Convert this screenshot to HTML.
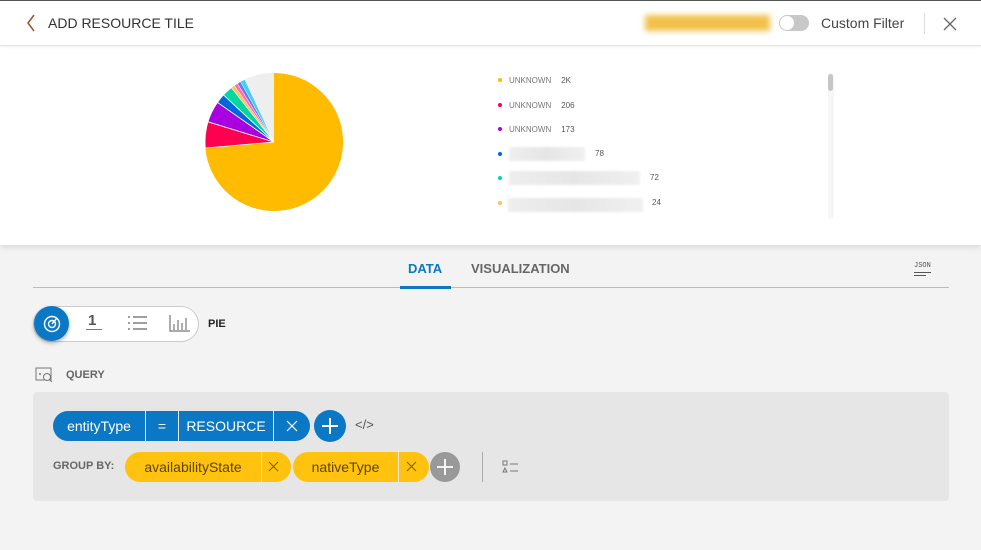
<!DOCTYPE html>
<html><head><meta charset="utf-8"><style>
*{box-sizing:border-box;margin:0;padding:0}
body{width:981px;height:550px;overflow:hidden;background:#f3f3f3;font-family:"Liberation Sans",sans-serif;position:relative}
.top{position:absolute;left:0;top:0;width:981px;height:245px;background:#fff;box-shadow:0 2px 6px rgba(0,0,0,.12);border-top:1px solid #555}
.hdr{position:absolute;left:0;top:0;width:981px;height:45px;border-bottom:1px solid #e4e4e4;box-shadow:0 1px 3px rgba(0,0,0,.06)}
.abs{position:absolute}
.lg{position:absolute;font-size:8px;color:#777}
.lg .d{position:absolute;left:0;top:2px;width:4px;height:4px;border-radius:50%}
.blur{position:absolute;height:14px;background:linear-gradient(90deg,#eee,#e6e6e6,#f0f0f0);filter:blur(1px)}
.chip{position:absolute;height:30px;color:#fff;font-size:14px;line-height:30px;text-align:center}
</style></head><body>
<div class="top">
 <div class="hdr">
  <svg class="abs" style="left:26px;top:13px" width="10" height="18"><path d="M8 1L2 9L8 17" stroke="#a0522d" stroke-width="1.5" fill="none"/></svg>
  <div class="abs" style="left:48px;top:14px;font-size:14px;color:#333">ADD RESOURCE TILE</div>
  <div class="abs" style="left:645px;top:14px;width:125px;height:16px;background:#f2c14a;filter:blur(3px)"></div>
  <div class="abs" style="left:779px;top:14px;width:30px;height:16px;border-radius:8px;background:#c8c8c8"></div>
  <div class="abs" style="left:780px;top:15px;width:14px;height:14px;border-radius:50%;background:#fff"></div>
  <div class="abs" style="left:821px;top:14px;font-size:14px;color:#444">Custom Filter</div>
  <div class="abs" style="left:924px;top:12px;width:1px;height:21px;background:#ddd"></div>
  <svg class="abs" style="left:943px;top:16px" width="14" height="14"><path d="M1 1L13 13M13 1L1 13" stroke="#666" stroke-width="1.3"/></svg>
 </div>
 <svg class="abs" style="left:0;top:0" width="400" height="240">
  <path d="M274 141L274 72A69 69 0 1 1 205.3 147Z" fill="#ffbb00"/>
  <path d="M274 141L205.3 147A69 69 0 0 1 208 120.8Z" fill="#ff0050" stroke="#fff" stroke-width=".8"/>
  <path d="M274 141L208 120.8A69 69 0 0 1 217.5 101.4Z" fill="#a800e0" stroke="#fff" stroke-width=".8"/>
  <path d="M274 141L217.5 101.4A69 69 0 0 1 223.5 93.9Z" fill="#0066dd" stroke="#fff" stroke-width=".8"/>
  <path d="M274 141L223.5 93.9A69 69 0 0 1 231.5 86.6Z" fill="#00d8a0" stroke="#fff" stroke-width=".8"/>
  <path d="M274 141L231.5 86.6A69 69 0 0 1 234.4 84.5Z" fill="#ffc060" stroke="#fff" stroke-width=".5"/>
  <path d="M274 141L234.4 84.5A69 69 0 0 1 237.4 82.5Z" fill="#ff70a0" stroke="#fff" stroke-width=".5"/>
  <path d="M274 141L237.4 82.5A69 69 0 0 1 240.5 80.7Z" fill="#7070ff" stroke="#fff" stroke-width=".5"/>
  <path d="M274 141L240.5 80.7A69 69 0 0 1 244.8 78.5Z" fill="#40d0f0" stroke="#fff" stroke-width=".5"/>
  <path d="M274 141L244.8 78.5A69 69 0 0 1 274 72Z" fill="#eeeeee"/>
 </svg>
 <div class="lg" style="left:498px;top:75px"><span class="d" style="background:#ffbb00"></span><span style="margin-left:11px">UNKNOWN</span><span style="margin-left:10px;color:#555">2K</span></div>
 <div class="lg" style="left:498px;top:100px"><span class="d" style="background:#ff0050"></span><span style="margin-left:11px">UNKNOWN</span><span style="margin-left:10px;color:#555">206</span></div>
 <div class="lg" style="left:498px;top:124px"><span class="d" style="background:#a800e0"></span><span style="margin-left:11px">UNKNOWN</span><span style="margin-left:10px;color:#555">173</span></div>
 <div class="lg" style="left:498px;top:149px"><span class="d" style="background:#0066dd"></span></div>
 <div class="blur" style="left:509px;top:146px;width:76px"></div><div class="lg" style="left:595px;top:148px;color:#555">78</div>
 <div class="lg" style="left:498px;top:173px"><span class="d" style="background:#00d8a0"></span></div>
 <div class="blur" style="left:509px;top:170px;width:131px"></div><div class="lg" style="left:650px;top:172px;color:#555">72</div>
 <div class="lg" style="left:498px;top:198px"><span class="d" style="background:#ffc060"></span></div>
 <div class="blur" style="left:508px;top:197px;width:135px"></div><div class="lg" style="left:652px;top:197px;color:#555">24</div>
 <div class="abs" style="left:828px;top:72px;width:6px;height:146px;background:#f6f6f6;border-radius:3px"></div>
 <div class="abs" style="left:828px;top:73px;width:5px;height:17px;background:#c6c6c6;border-radius:3px"></div>
</div>

<div class="abs" style="left:408px;top:261px;font-size:13px;font-weight:bold;color:#0b78c6">DATA</div>
<div class="abs" style="left:471px;top:261px;font-size:13px;font-weight:bold;color:#666">VISUALIZATION</div>
<div class="abs" style="left:33px;top:287px;width:916px;height:1px;background:#bbb"></div>
<div class="abs" style="left:400px;top:286px;width:51px;height:3px;background:#0b78c6"></div>
<div class="abs" style="left:914px;top:262px;font-size:7px;color:#555;font-family:'Liberation Mono',monospace">JSON</div>
<div class="abs" style="left:914px;top:272px;width:17px;height:1px;background:#555"></div>
<div class="abs" style="left:914px;top:275px;width:12px;height:1px;background:#555"></div>

<div class="abs" style="left:33px;top:306px;width:166px;height:36px;border:1px solid #ccc;border-radius:18px;background:#fff"></div>
<div class="abs" style="left:34px;top:306px;width:35px;height:35px;border-radius:50%;background:#0b78c6;box-shadow:0 2px 4px rgba(0,0,0,.3)"></div>
<svg class="abs" style="left:42px;top:314px" width="20" height="20"><circle cx="10" cy="10" r="7.5" stroke="#fff" stroke-width="1.4" fill="none"/><circle cx="10" cy="10" r="3.5" stroke="#fff" stroke-width="1.4" fill="none"/><path d="M10 10L15 4" stroke="#fff" stroke-width="1.4"/></svg>
<div class="abs" style="left:88px;top:312px;font-size:15px;font-weight:bold;color:#555">1</div>
<div class="abs" style="left:86px;top:329px;width:16px;height:1px;background:#777"></div>
<svg class="abs" style="left:127px;top:315px" width="22" height="16"><path d="M1 2h2M1 8h2M1 14h2M6 2h14M6 8h14M6 14h14" stroke="#666" stroke-width="1.2"/></svg>
<svg class="abs" style="left:169px;top:314px" width="22" height="18"><path d="M1 1V17H21M5 16V10M9 16V6M13 16V9M17 16V4" stroke="#777" stroke-width="1.2" fill="none"/></svg>
<div class="abs" style="left:208px;top:318px;font-size:11px;font-weight:bold;color:#222">PIE</div>

<svg class="abs" style="left:35px;top:367px" width="20" height="18"><rect x="1" y="1" width="15" height="12" stroke="#777" fill="none"/><circle cx="5" cy="7" r="1" fill="#777"/><circle cx="12" cy="10" r="3.5" stroke="#777" fill="#f3f3f3"/><path d="M14.5 12.5L17 15" stroke="#777"/></svg>
<div class="abs" style="left:66px;top:369px;font-size:11px;font-weight:bold;color:#666">QUERY</div>

<div class="abs" style="left:33px;top:392px;width:916px;height:109px;background:#e6e6e6;border-radius:4px"></div>
<div class="chip" style="left:53px;top:411px;width:92px;background:#0b78c6;border-radius:15px 0 0 15px">entityType</div>
<div class="chip" style="left:146px;top:411px;width:32px;background:#0b78c6">=</div>
<div class="chip" style="left:179px;top:411px;width:94px;background:#0b78c6">RESOURCE</div>
<div class="chip" style="left:274px;top:411px;width:36px;background:#0b78c6;border-radius:0 15px 15px 0"></div>
<svg class="abs" style="left:286px;top:420px" width="12" height="12"><path d="M1 1L11 11M11 1L1 11" stroke="#fff" stroke-width="1.2"/></svg>
<div class="abs" style="left:314px;top:410px;width:32px;height:32px;border-radius:50%;background:#0b78c6"></div>
<svg class="abs" style="left:320px;top:416px" width="20" height="20"><path d="M10 2V18M2 10H18" stroke="#fff" stroke-width="2"/></svg>
<div class="abs" style="left:355px;top:417px;font-size:13px;color:#555">&lt;/&gt;</div>

<div class="abs" style="left:53px;top:460px;font-size:11px;font-weight:bold;color:#666">GROUP BY:</div>
<div class="chip" style="left:125px;top:452px;width:136px;background:#ffc20e;color:#5a4500;border-radius:15px 0 0 15px">availabilityState</div>
<div class="chip" style="left:262px;top:452px;width:29px;background:#ffc20e;border-radius:0 15px 15px 0"></div>
<svg class="abs" style="left:268px;top:461px" width="11" height="11"><path d="M1 1L10 10M10 1L1 10" stroke="#7a5c00" stroke-width="1"/></svg>
<div class="chip" style="left:293px;top:452px;width:105px;background:#ffc20e;color:#5a4500;border-radius:15px 0 0 15px">nativeType</div>
<div class="chip" style="left:399px;top:452px;width:30px;background:#ffc20e;border-radius:0 15px 15px 0"></div>
<svg class="abs" style="left:406px;top:461px" width="11" height="11"><path d="M1 1L10 10M10 1L1 10" stroke="#7a5c00" stroke-width="1"/></svg>
<div class="abs" style="left:430px;top:452px;width:30px;height:30px;border-radius:50%;background:#999"></div>
<svg class="abs" style="left:436px;top:458px" width="18" height="18"><path d="M9 1V17M1 9H17" stroke="#fff" stroke-width="1.8"/></svg>
<div class="abs" style="left:482px;top:452px;width:1px;height:30px;background:#aaa"></div>
<svg class="abs" style="left:502px;top:460px" width="18" height="14"><rect x="1" y="1" width="4" height="4" stroke="#777" fill="none"/><path d="M1 12L3 8L5 12Z" stroke="#777" fill="none"/><path d="M8 4H16M8 11H16" stroke="#777"/></svg>
</body></html>
